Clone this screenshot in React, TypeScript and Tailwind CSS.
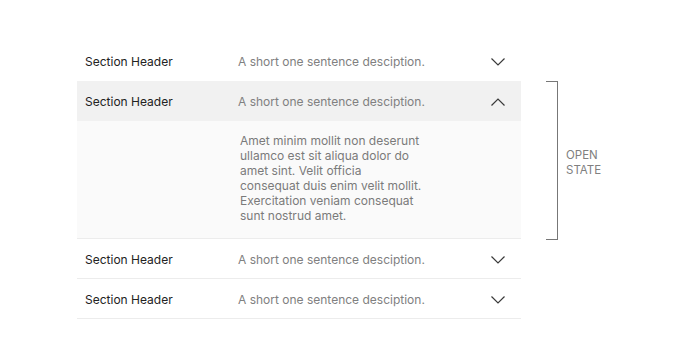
import React from "react";

const Chevron = ({ up }: { up?: boolean }) => (
  <svg width="16" height="10" viewBox="0 0 16 10" fill="none" className="text-[#3a3a3a]">
    {up ? (
      <path d="M1.5 8.5 L8 2 L14.5 8.5" stroke="currentColor" strokeWidth="1.2" />
    ) : (
      <path d="M1.5 1.5 L8 8 L14.5 1.5" stroke="currentColor" strokeWidth="1.2" />
    )}
  </svg>
);

const Row = ({ open, border }: { open?: boolean; border?: boolean }) => (
  <div
    className={`flex h-[40px] items-center pt-[2px] ${open ? "bg-[#f1f1f1]" : "bg-white"} ${
      border ? "border-b border-[#ececec]" : ""
    }`}
  >
    <div className="w-[161px] pl-[8px] text-[12px] text-[#222222]">Section Header</div>
    <div className="flex-1 text-[12px] text-[#808080]">A short one sentence desciption.</div>
    <div className="flex w-[46px] justify-start pl-[15px]">
      <Chevron up={open} />
    </div>
  </div>
);

export default function App() {
  return (
    <div
      className="flex h-[360px] w-[680px] bg-white"
      style={{ fontFamily: "Inter, 'Liberation Sans', sans-serif" }}
    >
      <div className="ml-[77px] mt-[41px] w-[444px]">
        <Row />
        <Row open />
        <div className="flex h-[118px] border-b border-[#ececec] bg-[#fafafa] pt-[12px]">
          <div className="ml-[163px] w-[182px] text-[12px] leading-[15px] text-[#7a7a7a]">
            Amet minim mollit non deserunt ullamco est sit aliqua dolor do amet sint. Velit officia
            consequat duis enim velit mollit. Exercitation veniam consequat sunt nostrud amet.
          </div>
        </div>
        <Row border />
        <Row border />
      </div>
      <div className="ml-[25px] mt-[81px] flex">
        <div className="h-[159px] w-[12px] border-y border-r border-[#777777]" />
        <div className="ml-[8px] mt-[67px] text-[11.5px] leading-[15px] text-[#808080]">
          OPEN
          <br />
          STATE
        </div>
      </div>
    </div>
  );
}
